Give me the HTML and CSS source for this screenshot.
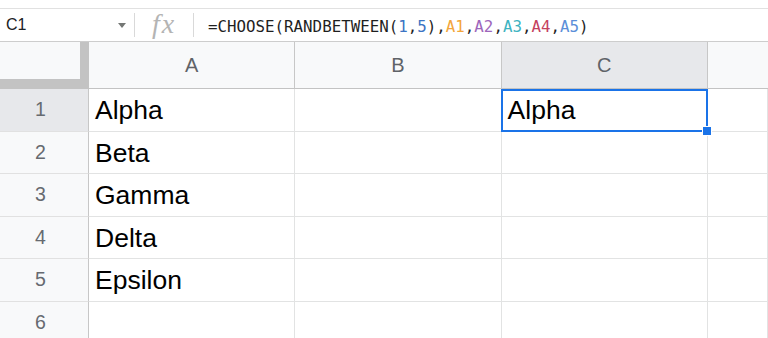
FILE: index.html
```html
<!DOCTYPE html>
<html lang="en">
<head>
    <meta charset="UTF-8">
    <title>Sheet</title>
    <link rel="stylesheet" href="styles.css">
</head>
<body>
    <div class="topstrip"></div>

    <div class="formulabar">
        <div class="namebox">
            <span class="cellref">C1</span>
            <svg class="caret" width="8" height="5" viewBox="0 0 8 5"><path d="M0 0h8L4 5z" fill="#747775"/></svg>
        </div>
        <div class="sep"></div>
        <div class="fx">fx</div>
        <div class="sep"></div>
        <div class="formula">=CHOOSE(RANDBETWEEN(<span class="num">1</span>,<span class="num">5</span>),<span class="r1">A1</span>,<span class="r2">A2</span>,<span class="r3">A3</span>,<span class="r4">A4</span>,<span class="r5">A5</span>)</div>
    </div>

    <div class="sheet">
        <div class="corner"></div>
        <div class="colhead">A</div>
        <div class="colhead">B</div>
        <div class="colhead selected">C</div>
        <div class="colhead last"></div>

        <div class="rowhead selected">1</div>
        <div class="cell">Alpha</div>
        <div class="cell"></div>
        <div class="cell active">Alpha</div>
        <div class="cell"></div>

        <div class="rowhead">2</div>
        <div class="cell">Beta</div>
        <div class="cell"></div>
        <div class="cell"></div>
        <div class="cell"></div>

        <div class="rowhead">3</div>
        <div class="cell">Gamma</div>
        <div class="cell"></div>
        <div class="cell"></div>
        <div class="cell"></div>

        <div class="rowhead">4</div>
        <div class="cell">Delta</div>
        <div class="cell"></div>
        <div class="cell"></div>
        <div class="cell"></div>

        <div class="rowhead">5</div>
        <div class="cell">Epsilon</div>
        <div class="cell"></div>
        <div class="cell"></div>
        <div class="cell"></div>

        <div class="rowhead">6</div>
        <div class="cell"></div>
        <div class="cell"></div>
        <div class="cell"></div>
        <div class="cell"></div>
    </div>
</body>
</html>
```

FILE: styles.css
```css
body {
    margin: 0;
    background: #fff;
    font-family: "Liberation Sans", Arial, sans-serif;
    overflow: hidden;
}

.topstrip {
    height: 8px;
    border-bottom: 1px solid #e1e1e1;
}

.formulabar {
    display: flex;
    align-items: center;
    height: 32px;
    border-bottom: 1px solid #cdcdcd;
}

.namebox {
    width: 128px;
    display: flex;
    align-items: center;
    justify-content: space-between;
    padding-left: 6px;
    box-sizing: border-box;
}

.cellref {
    font-size: 16px;
    color: #202124;
}

.caret {
    margin-right: 2px;
    margin-top: 1px;
}

.sep {
    width: 1px;
    height: 24px;
    background: #d9d9d9;
    margin-left: 6px;
}

.fx {
    width: 58px;
    text-align: center;
    font-family: "Liberation Serif", serif;
    font-style: italic;
    font-size: 28px;
    color: #b4b4b4;
    margin-top: -3px;
    letter-spacing: 2px;
}

.fx + .sep {
    margin-left: 0;
}

.formula {
    margin-left: 14px;
    font-family: "DejaVu Sans Mono", "Liberation Mono", monospace;
    font-size: 15.8px;
    color: #1f1f1f;
    white-space: nowrap;
    padding-top: 2px;
}

.num { color: #3c74c3; }
.r1 { color: #f3a63b; }
.r2 { color: #9e66bb; }
.r3 { color: #3db3c1; }
.r4 { color: #c4415e; }
.r5 { color: #5b8fd9; }

.sheet {
    display: grid;
    grid-template-columns: 89px repeat(3, 206.3px) 1fr;
    grid-template-rows: 47px repeat(6, 42.5px);
}

.sheet > div {
    box-sizing: border-box;
}

.corner {
    background: #f8f9fa;
    border-right: 9px solid #c3c3c3;
    border-bottom: 10px solid #c3c3c3;
}

.colhead {
    background: #f8f9fa;
    border-right: 1px solid #c7c7c7;
    border-bottom: 1px solid #c3c3c3;
    display: flex;
    align-items: center;
    justify-content: center;
    font-size: 20px;
    color: #5f6368;
    padding-top: 1px;
}

.colhead.selected {
    background: #e7e8eb;
}

.colhead.last {
    border-right: none;
}

.rowhead {
    background: #f8f9fa;
    border-right: 1px solid #c7c7c7;
    border-bottom: 1px solid #e1e1e1;
    display: flex;
    align-items: center;
    justify-content: center;
    padding-right: 7px;
    font-size: 19.5px;
    color: #666a70;
}

.rowhead.selected {
    background: #e7e8eb;
}

.cell {
    border-right: 1px solid #e2e3e3;
    border-bottom: 1px solid #e2e3e3;
    display: flex;
    align-items: center;
    padding-left: 6px;
    padding-top: 2px;
    font-size: 26.5px;
    color: #000;
    white-space: nowrap;
}

.cell.active {
    position: relative;
}

.cell.active::before {
    content: "";
    position: absolute;
    top: 0;
    left: -1px;
    right: -1px;
    bottom: -1px;
    border: 2px solid #1a73e8;
}

.cell.active::after {
    content: "";
    position: absolute;
    right: -5px;
    bottom: -5px;
    width: 8px;
    height: 8px;
    background: #1a73e8;
    border: 1px solid #fff;
}
```
